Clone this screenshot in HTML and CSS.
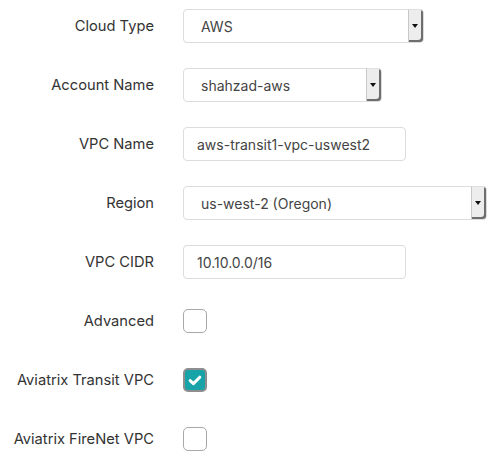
FILE: index.html
```html
<!DOCTYPE html>
<html>
<head>
<meta charset="utf-8">
<link rel="stylesheet" href="styles.css">
</head>
<body>
<form class="form">
  <label class="label">Cloud Type</label>
  <div class="select w-cloud"><span class="value">AWS</span><span class="btn"><span class="arrow"></span></span></div>

  <label class="label">Account Name</label>
  <div class="select w-account"><span class="value">shahzad-aws</span><span class="btn"><span class="arrow"></span></span></div>

  <label class="label">VPC Name</label>
  <div class="input w-input"><span class="value">aws-transit1-vpc-uswest2</span></div>

  <label class="label">Region</label>
  <div class="select w-region"><span class="value">us-west-2 (Oregon)</span><span class="btn"><span class="arrow"></span></span></div>

  <label class="label">VPC CIDR</label>
  <div class="input w-input"><span class="value">10.10.0.0/16</span></div>

  <label class="label">Advanced</label>
  <div class="cell"><span class="check"></span></div>

  <label class="label">Aviatrix Transit VPC</label>
  <div class="cell"><span class="check checked"><svg viewBox="0 0 24 24" width="24" height="24"><path d="M7.2 12.6 L10.4 15.6 L16.8 9.2" fill="none" stroke="#fff" stroke-width="3" stroke-linecap="round" stroke-linejoin="round"/></svg></span></div>

  <label class="label">Aviatrix FireNet VPC</label>
  <div class="cell"><span class="check"></span></div>
</form>
</body>
</html>
```

FILE: styles.css
```css
html, body {
  margin: 0;
  padding: 0;
  background: #fff;
}
body {
  font-family: Inter, "Open Sans", sans-serif;
  font-size: 14px;
  color: #333;
}
.form {
  display: grid;
  grid-template-columns: 154px auto;
  grid-auto-rows: 34px;
  column-gap: 29px;
  row-gap: 25px;
  padding-top: 9px;
  align-items: center;
  justify-items: start;
}
.label {
  justify-self: end;
  color: #333;
  font-size: 14.7px;
  white-space: nowrap;
}
.select, .input {
  box-sizing: border-box;
  height: 34px;
  border: 1px solid #dcdcdc;
  border-radius: 4px;
  display: flex;
  align-items: center;
  background: #fff;
  position: relative;
}
.select .value { padding-left: 17px; flex: 1; color: #444; }
.input .value { padding-left: 13px; color: #444; }
.w-cloud { width: 241px; }
.w-account { width: 199px; }
.w-region { width: 304px; }
.w-input { width: 223px; }
.btn {
  box-sizing: border-box;
  width: 15px;
  height: 33px;
  align-self: flex-start;
  margin-top: -1px;
  background: #ededed;
  border-left: 1px solid #c8c8c8;
  border-top: 1px solid #e0e0e0;
  box-shadow: inset -2px -2px 0 #6e6e6e;
  border-radius: 0 3px 3px 0;
  display: flex;
  align-items: center;
  justify-content: center;
  padding-right: 2px;
}
.arrow {
  width: 0;
  height: 0;
  border-left: 3px solid transparent;
  border-right: 3px solid transparent;
  border-top: 4px solid #111;
}
.cell { display: flex; align-items: center; }
.check {
  box-sizing: border-box;
  width: 24px;
  height: 24px;
  border: 1.5px solid #a8a8a8;
  border-radius: 5px;
  background: #fff;
  display: block;
}
.check.checked {
  background: #17a3a8;
  border: 2px solid #8e8e8e;
  position: relative;
}
.check.checked svg {
  position: absolute;
  left: -2px;
  top: -2px;
}
```
